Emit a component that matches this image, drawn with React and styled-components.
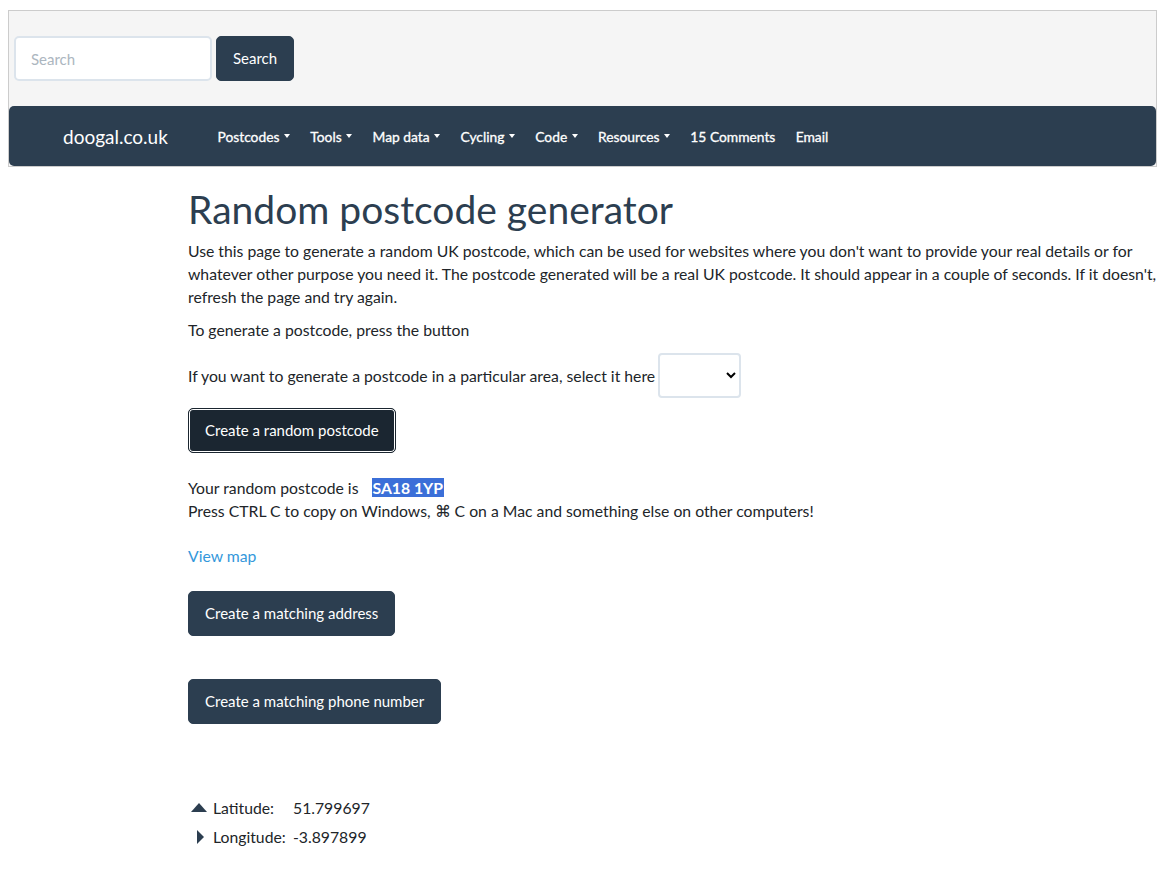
import React from "react";
import styled, { createGlobalStyle } from "styled-components";

const GlobalStyle = createGlobalStyle`
  body {
    margin: 8px;
    font-family: Lato, "Open Sans", sans-serif;
    font-size: 15.75px;
    line-height: 23px;
    color: #212529;
    background: #fff;
  }
  * { box-sizing: border-box; }
`;

const navItems = [
  { label: "Postcodes", caret: true },
  { label: "Tools", caret: true },
  { label: "Map data", caret: true },
  { label: "Cycling", caret: true },
  { label: "Code", caret: true },
  { label: "Resources", caret: true },
  { label: "15 Comments" },
  { label: "Email" },
];

const App = () => {
  return (
    <>
      <GlobalStyle />
      <Header>
        <SearchForm>
          <SearchInput placeholder="Search" />
          <Button>Search</Button>
        </SearchForm>
        <Navbar>
          <Brand>doogal.co.uk</Brand>
          <NavList>
            {navItems.map((item) => (
              <NavLink key={item.label}>
                {item.label}
                {item.caret && <Caret />}
              </NavLink>
            ))}
          </NavList>
        </Navbar>
      </Header>

      <Main>
        <Title>Random postcode generator</Title>
        <Intro $gap={10}>
          Use this page to generate a random UK postcode, which can be used for
          websites where you don't want to provide your real details or for
          whatever other purpose you need it. The postcode generated will be a
          real UK postcode. It should appear in a couple of seconds. If it
          doesn't, refresh the page and try again.
        </Intro>
        <Intro $gap={11.5}>To generate a postcode, press the button</Intro>
        <AreaRow>
          If you want to generate a postcode in a particular area, select it
          here
          <AreaSelect>
            <option></option>
          </AreaSelect>
        </AreaRow>
        <Button $focused>Create a random postcode</Button>

        <Result>
          Your random postcode is <Postcode>SA18 1YP</Postcode>
          <br />
          Press CTRL C to copy on Windows, ⌘ C on a Mac and something else on
          other computers!
        </Result>
        <MapLink href="#">View map</MapLink>

        <Button $gap={43}>Create a matching address</Button>
        <Button>Create a matching phone number</Button>

        <CoordTable>
          <tbody>
            <tr>
              <IconCell>
                <svg width="16" height="9" viewBox="0 0 16 9">
                  <path d="M0 9 L8 0 L16 9 Z" fill="#2c3e50" />
                </svg>
              </IconCell>
              <LabelCell>Latitude:</LabelCell>
              <td>51.799697</td>
            </tr>
            <tr>
              <IconCell>
                <svg width="16" height="14" viewBox="0 0 16 14">
                  <path d="M6 0 L13 7 L6 14 Z" fill="#2c3e50" />
                </svg>
              </IconCell>
              <LabelCell>Longitude:</LabelCell>
              <td>-3.897899</td>
            </tr>
          </tbody>
        </CoordTable>
      </Main>
    </>
  );
};

export default App;

const Header = styled.div`
  margin-top: 2px;
  border: 1px solid #cccccc;
  background: #f5f5f5;
`;

const SearchForm = styled.div`
  display: flex;
  align-items: flex-start;
  gap: 4px;
  padding: 25px 5px 25px;
`;

const SearchInput = styled.input`
  width: 198px;
  height: 45px;
  padding: 0 15px;
  border: 2px solid #dce4ec;
  border-radius: 5px;
  background: #fff;
  font-family: Lato, sans-serif;
  font-size: 15px;
  color: #212529;
  outline: none;
  &::placeholder {
    color: #acb6c0;
  }
`;

const Button = styled.button`
  display: block;
  height: 45px;
  padding: 0 16px;
  margin-bottom: ${(p) => (p.$gap ? p.$gap : 0)}px;
  border: 1px solid ${(p) => (p.$focused ? "#1a252f" : "#2c3e50")};
  border-radius: 5px;
  background: ${(p) => (p.$focused ? "#1b2631" : "#2c3e50")};
  color: #fff;
  font-family: Lato, sans-serif;
  font-size: 15px;
  line-height: 22.5px;
  cursor: pointer;
  box-shadow: ${(p) => (p.$focused ? "inset 0 0 0 1px #ffffff" : "none")};
`;

const Navbar = styled.nav`
  display: flex;
  align-items: center;
  height: 60px;
  padding-left: 54px;
  background: #2c3e50;
  border-radius: 5px;
`;

const Brand = styled.a`
  font-size: 19px;
  color: #fff;
  margin-right: 39.5px;
`;

const NavList = styled.div`
  display: flex;
  align-items: center;
`;

const NavLink = styled.a`
  display: flex;
  align-items: center;
  padding: 0 10.2px;
  font-size: 13.8px;
  font-weight: 400;
  color: #fff;
  white-space: nowrap;
  -webkit-text-stroke: 0.3px #fff;
`;

const Caret = styled.span`
  display: inline-block;
  margin-left: 4.5px;
  border-top: 4px solid #fff;
  border-left: 3.5px solid transparent;
  border-right: 3.5px solid transparent;
`;

const Main = styled.main`
  padding-left: 180px;
  margin-top: 18.5px;
`;

const Title = styled.h1`
  margin: 0 0 7px;
  font-size: 39px;
  font-weight: 400;
  line-height: 1.2;
  color: #2c3e50;
`;

const Intro = styled.p`
  margin: 0 0 ${(p) => p.$gap}px;
`;

const AreaRow = styled.div`
  display: flex;
  align-items: center;
  margin-bottom: 10px;
`;

const AreaSelect = styled.select`
  width: 83px;
  height: 45px;
  margin-left: 3px;
  padding: 0 8px;
  border: 2px solid #dce4ec;
  border-radius: 4px;
  background: #fff;
  font-family: Lato, sans-serif;
  font-size: 15px;
`;

const Result = styled.div`
  margin-top: 23.5px;
  margin-bottom: 22px;
`;

const Postcode = styled.span`
  margin-left: 9px;
  padding: 0 1px;
  background: #3b6fd8;
  color: #fff;
  font-weight: 700;
`;

const MapLink = styled.a`
  display: block;
  width: fit-content;
  margin-bottom: 23.5px;
  color: #3498db;
  text-decoration: none;
`;

const CoordTable = styled.table`
  margin-top: 69.5px;
  border-collapse: collapse;
  td {
    height: 29px;
    padding: 0;
    vertical-align: middle;
  }
`;

const IconCell = styled.td`
  width: 25px;
  padding-left: 3px !important;
  svg {
    display: block;
  }
`;

const LabelCell = styled.td`
  width: 80px;
`;
